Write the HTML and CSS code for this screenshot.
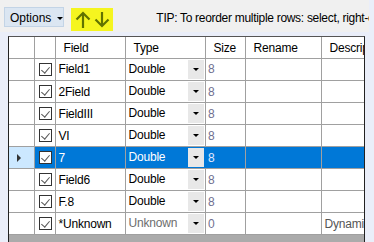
FILE: index.html
```html
<!DOCTYPE html>
<html lang="en">
<head>
  <meta charset="UTF-8" />
  <title>Fields</title>
  <link rel="stylesheet" href="styles.css">
</head>
<body>

  <div class="toolbar">
    <div class="options-btn">Options <span class="caret"></span></div>
    <div class="sep"></div>
    <div class="arrows">
      <svg width="42" height="23" viewBox="0 0 42 23">
        <path d="M12 20 V5 M5.5 11.5 L12 5 L18.5 11.5" fill="none" stroke="#617300" stroke-width="2.2"/>
        <path d="M31 4 V18 M24.5 11.5 L31 18 L37.5 11.5" fill="none" stroke="#617300" stroke-width="2.2"/>
      </svg>
    </div>
    <div class="tip">TIP: To reorder multiple rows: select, right-click</div>
  </div>

  <div class="grid">
    <table>
      <tr class="head">
        <th class="rh"></th><th class="ck"></th><th class="fld">Field</th><th class="typ">Type</th><th class="sz">Size</th><th class="ren">Rename</th><th class="desc">Description</th>
      </tr>
      <tr><td class="rh"></td><td class="ck"><span class="box"></span></td><td>Field1</td><td class="typ"><span>Double</span><span class="dd"></span></td><td class="num">8</td><td></td><td></td></tr>
      <tr><td class="rh"></td><td class="ck"><span class="box"></span></td><td>2Field</td><td class="typ"><span>Double</span><span class="dd"></span></td><td class="num">8</td><td></td><td></td></tr>
      <tr><td class="rh"></td><td class="ck"><span class="box"></span></td><td>FieldIII</td><td class="typ"><span>Double</span><span class="dd"></span></td><td class="num">8</td><td></td><td></td></tr>
      <tr><td class="rh"></td><td class="ck"><span class="box"></span></td><td>VI</td><td class="typ"><span>Double</span><span class="dd"></span></td><td class="num">8</td><td></td><td></td></tr>
      <tr class="sel"><td class="rh"><span class="cur"></span></td><td class="ck"><span class="box"></span></td><td>7</td><td class="typ"><span>Double</span><span class="dd"></span></td><td class="num">8</td><td></td><td></td></tr>
      <tr><td class="rh"></td><td class="ck"><span class="box"></span></td><td>Field6</td><td class="typ"><span>Double</span><span class="dd"></span></td><td class="num">8</td><td></td><td></td></tr>
      <tr><td class="rh"></td><td class="ck"><span class="box"></span></td><td>F.8</td><td class="typ"><span>Double</span><span class="dd"></span></td><td class="num">8</td><td></td><td></td></tr>
      <tr><td class="rh"></td><td class="ck"><span class="box"></span></td><td>*Unknown</td><td class="typ dim"><span>Unknown</span><span class="dd"></span></td><td class="num">0</td><td></td><td class="dyn">Dynamic</td></tr>
    </table>
  </div>

</body>
</html>
```

FILE: styles.css
```css
* { margin: 0; padding: 0; box-sizing: border-box; }

body {
  background: #eaeef9;
  font-family: 'Liberation Sans', Arial, sans-serif;
  font-size: 12px;
  color: #000;
  width: 374px;
  height: 242px;
  overflow: hidden;
}

.toolbar {
  height: 32px;
  width: 369px;
  background: #f0f0f0;
  display: flex;
  align-items: flex-start;
  padding: 7px 0 0 4px;
  white-space: nowrap;
  overflow: hidden;
}

.options-btn {
  width: 62px;
  height: 20px;
  background: #dbe6f2;
  border: 1px solid #c3d4e6;
  padding: 2px 0 0 5px;
  display: flex;
  align-items: center;
  gap: 6px;
  line-height: 14px;
}

.caret {
  width: 0;
  height: 0;
  border-left: 3px solid transparent;
  border-right: 3px solid transparent;
  border-top: 3px solid #000;
}

.sep {
  width: 1px;
  height: 20px;
  background: #7a7a7a;
  margin-left: 4px;
}

.arrows {
  margin: 1px 0 0 3px;
  width: 42px;
  height: 23px;
  background: #f5f51f;
}

.arrows svg { display: block; }

.tip {
  margin: 3px 0 0 43px;
  line-height: 16px;
  letter-spacing: -0.3px;
}

.grid {
  margin: 4px 0 0 8px;
  width: 357px;
  height: 206px;
  background: #ababab;
  border-top: 1px solid #555;
  border-left: 1px solid #222;
  border-right: 1px solid #222;
  overflow: hidden;
}

table {
  border-collapse: collapse;
  table-layout: fixed;
  width: 380px;
  background: #fff;
}

th, td {
  height: 22px;
  border-right: 1px solid #a0a0a0;
  border-bottom: 1px solid #a0a0a0;
  font-weight: normal;
  text-align: left;
  padding: 0 0 0 3px;
  white-space: nowrap;
  overflow: hidden;
  vertical-align: middle;
  letter-spacing: -0.2px;
}

.head th { height: 21px; padding-left: 8px; padding-top: 1px; }

.rh { width: 25px; padding: 0; }
.ck { width: 21px; padding: 0 0 0 4px; }
.fld { width: 70px; }
.typ { width: 80px; }
.sz { width: 40px; }
.ren { width: 76px; }

.box {
  display: block;
  width: 13px;
  height: 13px;
  border: 1px solid #333;
  background: #fff;
  position: relative;
}

.box::after {
  content: "";
  position: absolute;
  left: 3px;
  top: 1px;
  width: 4px;
  height: 7px;
  border-right: 1.5px solid #555;
  border-bottom: 1.5px solid #555;
  transform: rotate(40deg);
}

td.typ {
  display: flex;
  align-items: center;
  justify-content: space-between;
  padding: 1px 1px 1px 3px;
}

.dd {
  width: 16px;
  height: 19px;
  background: #e8e8e8;
  position: relative;
}

.dd::after {
  content: "";
  position: absolute;
  left: 5px;
  top: 8px;
  border-left: 3px solid transparent;
  border-right: 3px solid transparent;
  border-top: 3px solid #000;
}

.num { color: #707090; }
.dim { color: #6d6d6d; }
.dyn { color: #555; }

.sel td { background: #0078d7; color: #fff; }
.sel td.rh { background: #cce8ff; }
.sel td.num { color: #e0e8ff; }

.cur {
  display: block;
  margin-left: 8px;
  width: 0;
  height: 0;
  border-top: 4px solid transparent;
  border-bottom: 4px solid transparent;
  border-left: 4px solid #333;
}
```
